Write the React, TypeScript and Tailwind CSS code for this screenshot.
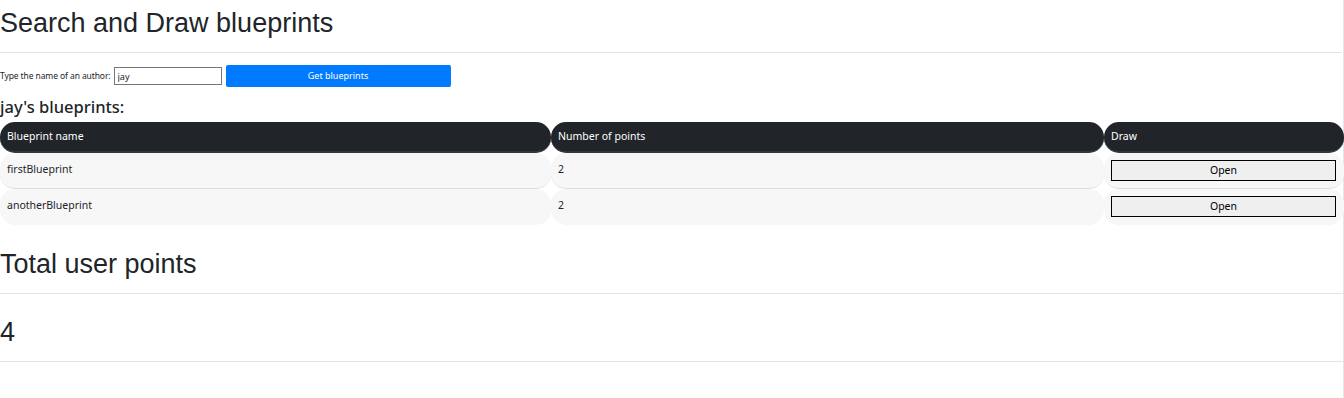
import React from "react";

const rows = [
  { name: "firstBlueprint", points: 2 },
  { name: "anotherBlueprint", points: 2 },
];

export default function App() {
  const ui = { fontFamily: '"Noto Sans", "Open Sans", sans-serif' };
  const arial = { fontFamily: '"Liberation Sans", Arial, sans-serif' };
  return (
    <div className="w-[1344px] min-h-[398px] bg-white border-r border-[#e6e6e6] text-[#212529]" style={ui}>
      <h1 className="text-[27px] leading-[31px] pt-[8px] pb-[13px] font-normal" style={arial}>
        Search and Draw blueprints
      </h1>
      <div className="h-px bg-[#e3e3e3] mr-[1px]" />
      <div className="flex items-center h-[22px] mt-[12px]">
        <span className="text-[8.5px] leading-none mr-[3px] tracking-[-0.1px]">Type the name of an author:</span>
        <input
          className="w-[108px] h-[18px] border border-[#767676] text-[9px] px-[3px] outline-none"
          defaultValue="jay"
          style={ui}
        />
        <button className="ml-[4px] w-[225px] h-[22px] rounded-[2px] bg-[#007bff] text-white text-[9px]">
          Get blueprints
        </button>
      </div>
      <h4 className="text-[16.5px] font-medium leading-[22px] mt-[9px] mb-[4px]">jay's blueprints:</h4>
      <table className="w-[1344px] table-fixed border-separate border-spacing-0 text-[10.5px]">
        <colgroup>
          <col className="w-[551px]" />
          <col className="w-[553px]" />
          <col className="w-[240px]" />
        </colgroup>
        <thead>
          <tr>
            {["Blueprint name", "Number of points", "Draw"].map((h) => (
              <th
                key={h}
                className="bg-[#212529] text-white font-normal text-left h-[31px] pl-[7px] rounded-[15px] border-b-2 border-[#32383e] leading-none"
              >
                {h}
              </th>
            ))}
          </tr>
        </thead>
        <tbody>
          {rows.map((r, i) => (
            <tr key={r.name}>
              <td className={`bg-[#f7f7f7] h-[36px] pl-[7px] align-top pt-[9px] rounded-[15px] ${i === 0 ? "border-b border-[#dcdcdc]" : ""}`}>
                {r.name}
              </td>
              <td className={`bg-[#f7f7f7] h-[36px] pl-[7px] align-top pt-[9px] rounded-[15px] ${i === 0 ? "border-b border-[#dcdcdc]" : ""}`}>
                {r.points}
              </td>
              <td className={`bg-[#f7f7f7] h-[36px] pl-[7px] pr-[7px] align-top pt-[7px] rounded-[15px] ${i === 0 ? "border-b border-[#dcdcdc]" : ""}`}>
                <button className="w-[225px] h-[21px] border border-black bg-[#efefef] text-[10.5px] text-black" style={ui}>
                  Open
                </button>
              </td>
            </tr>
          ))}
        </tbody>
      </table>
      <h2 className="text-[27px] leading-[31px] pt-[24px] pb-[13px] font-normal" style={arial}>
        Total user points
      </h2>
      <div className="h-px bg-[#e3e3e3]" />
      <div className="text-[27px] leading-[31px] pt-[23px] pb-[13px]" style={arial}>
        4
      </div>
      <div className="h-px bg-[#e3e3e3]" />
    </div>
  );
}
